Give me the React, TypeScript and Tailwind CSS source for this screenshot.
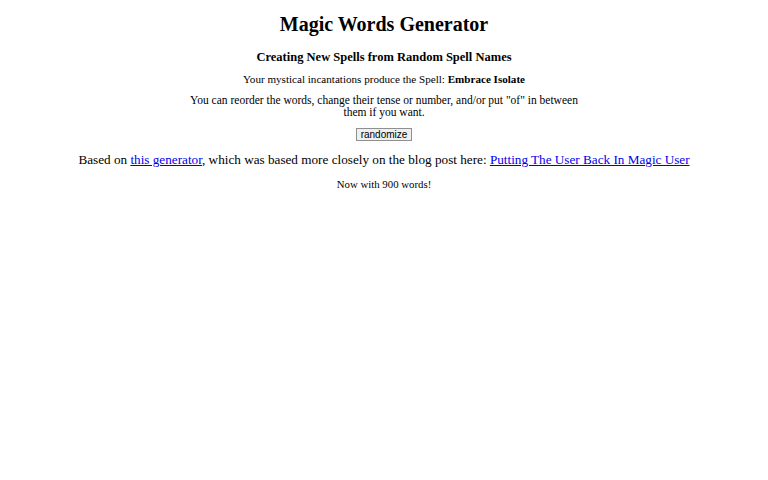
import React, { useState } from 'react';

const SPELLS = ['Embrace Isolate', 'Whisper Flame', 'Shatter Bind', 'Hollow Crown', 'Summon Veil'];

export default function App() {
  const [spell, setSpell] = useState(SPELLS[0]);

  const randomize = () => {
    setSpell(SPELLS[Math.floor(Math.random() * SPELLS.length)]);
  };

  return (
    <div className="min-h-screen bg-white text-black text-center font-['Liberation_Serif',serif]">
      <h1 className="pt-[11px] text-[20px] font-bold leading-[26px]">Magic Words Generator</h1>
      <h2 className="mt-[12px] text-[12.5px] font-bold leading-[16px]">Creating New Spells from Random Spell Names</h2>
      <p className="mt-[7px] text-[11.1px] leading-[14px]">
        Your mystical incantations produce the Spell: <b>{spell}</b>
      </p>
      <p className="mx-auto mt-[8px] w-[398px] text-[11.5px] leading-[12px]">
        You can reorder the words, change their tense or number, and/or put "of" in between them if you want.
      </p>
      <button
        onClick={randomize}
        className="mt-[10px] border border-[#8f8f8f] bg-[#efefef] px-[4px] font-['Liberation_Sans',sans-serif] text-[10px] leading-[11px] text-black"
      >
        randomize
      </button>
      <p className="mt-[7px] text-[13.2px] leading-[16px]">
        Based on <a href="#" className="text-[#0000ee] underline">this generator</a>, which was based more closely on the blog post here:{' '}
        <a href="#" className="text-[#0000ee] underline">Putting The User Back In Magic User</a>
      </p>
      <p className="mt-[10px] text-[10.8px] leading-[12px]">Now with 900 words!</p>
    </div>
  );
}
